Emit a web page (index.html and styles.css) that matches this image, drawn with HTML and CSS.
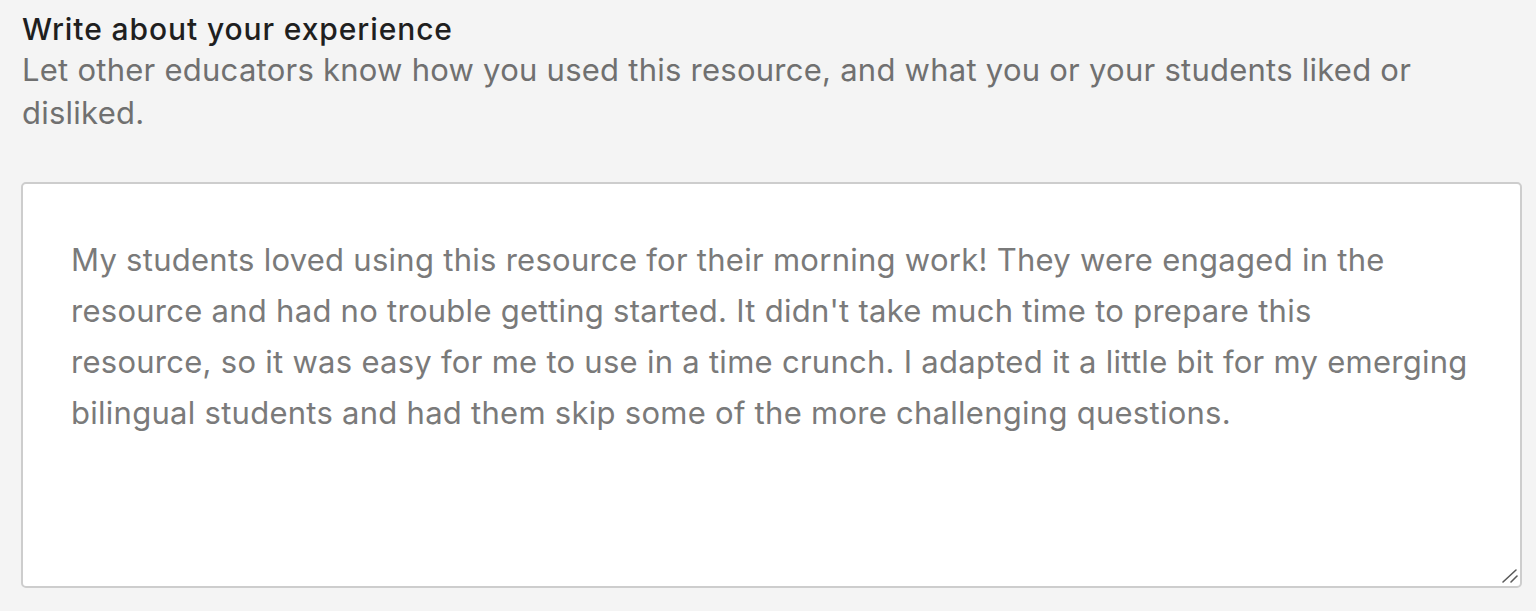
FILE: index.html
```html
<!DOCTYPE html>
<html lang="en">
<head>
<meta charset="utf-8">
<title>Write about your experience</title>
<link rel="stylesheet" href="styles.css">
</head>
<body>
<main class="review-field">
  <label class="field-label" for="experience">Write about your experience</label>
  <p class="field-help">Let other educators know how you used this resource, and what you or your students liked or disliked.</p>
  <div class="input-wrap">
    <textarea id="experience" class="field-input">My students loved using this resource for their morning work! They were engaged in the
resource and had no trouble getting started. It didn't take much time to prepare this
resource, so it was easy for me to use in a time crunch. I adapted it a little bit for my emerging
bilingual students and had them skip some of the more challenging questions.</textarea>
    <svg class="resize-grip" width="18" height="18" viewBox="0 0 18 18" aria-hidden="true">
      <line x1="2" y1="15" x2="15" y2="3" stroke="#5a5a5a" stroke-width="1.6" stroke-linecap="round"/>
      <line x1="10" y1="15" x2="16" y2="9" stroke="#5a5a5a" stroke-width="1.6" stroke-linecap="round"/>
    </svg>
  </div>
</main>
</body>
</html>
```

FILE: styles.css
```css
html, body {
  margin: 0;
  padding: 0;
  background: #f4f4f4;
}

body {
  font-family: Inter, "Liberation Sans", sans-serif;
}

.review-field {
  display: flex;
  flex-direction: column;
  align-items: flex-start;
  padding: 10px 15px 0 22px;
}

.field-label {
  font-size: 30px;
  font-weight: 500;
  letter-spacing: 0.9px;
  color: #1f1f1f;
  line-height: 38px;
}

.field-help {
  margin: 0 0 48px 0;
  font-size: 31px;
  letter-spacing: 0.25px;
  line-height: 43px;
  color: #707070;
  max-width: 1430px;
}

.input-wrap {
  position: relative;
  margin-left: -1px;
}

.field-input {
  display: block;
  box-sizing: border-box;
  width: 1501px;
  height: 406px;
  margin: 0;
  padding: 50px 20px 50px 48px;
  border: 2px solid #cdcdcd;
  border-radius: 5px;
  background: #ffffff;
  font-family: Inter, "Liberation Sans", sans-serif;
  font-size: 31px;
  letter-spacing: 0.27px;
  line-height: 51px;
  color: #7a7a7a;
  white-space: pre-wrap;
  resize: none;
  outline: none;
}

.resize-grip {
  position: absolute;
  right: 3px;
  bottom: 3px;
}
```
